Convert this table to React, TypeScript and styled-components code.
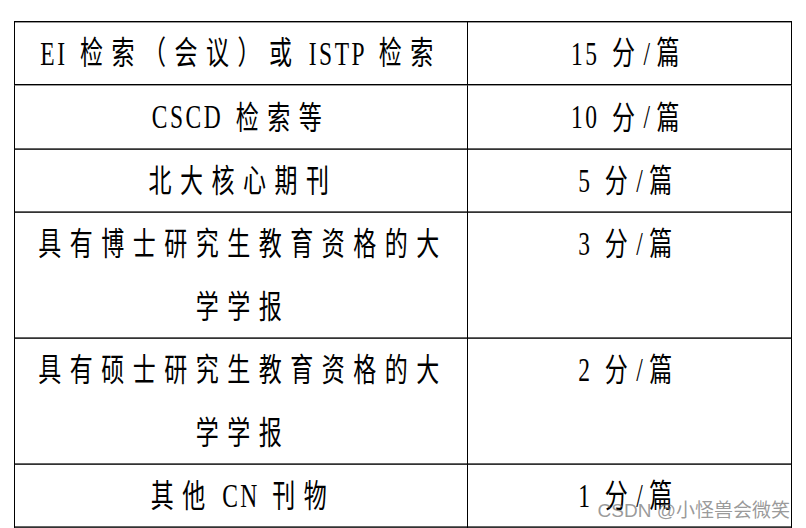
import styled, { createGlobalStyle } from "styled-components";

const GlobalStyle = createGlobalStyle`
  html, body {
    margin: 0;
    padding: 0;
    background: #fff;
  }
  body {
    width: 806px;
    height: 528px;
    overflow: hidden;
    font-family: "Liberation Serif", "Noto Sans CJK SC", serif;
    color: #000;
  }
`;

const Page = styled.div`
  position: relative;
  width: 806px;
  height: 528px;
  padding: 21px 0 0 14px;
  box-sizing: border-box;
  overflow: hidden;
`;

const Table = styled.table`
  border-collapse: collapse;
  table-layout: fixed;
  width: 777px;
  transform: scaleY(1.4);
  transform-origin: top left;
`;

const Cell = styled.td<{ $width: number }>`
  width: ${(p) => p.$width}px;
  border: 1px solid #000;
  padding: 0 18px;
  box-sizing: border-box;
  text-align: center;
  vertical-align: top;
  font-family: "Noto Sans CJK SC", sans-serif;
  font-size: 23px;
  line-height: 44.4px;
`;

const Han = styled.span`
  font-family: "Noto Sans CJK SC", sans-serif;
  font-size: 23px;
  line-height: 1;
  vertical-align: 1.8px;
  letter-spacing: 8.5px;
  padding-left: 4px;
  -webkit-box-decoration-break: clone;
  box-decoration-break: clone;
`;

const Latin = styled.span`
  font-family: "Liberation Serif", serif;
  font-size: 23.5px;
  line-height: 1;
  vertical-align: 1.8px;
  letter-spacing: 2.5px;
`;

const Watermark = styled.div`
  position: absolute;
  right: 16px;
  bottom: 6px;
  font-family: "Liberation Sans", "Noto Sans CJK SC", sans-serif;
  font-size: 19px;
  color: rgba(110, 110, 110, 0.7);
  white-space: nowrap;
`;

const rows = [
  { name: "EI 检索（会议）或 ISTP 检索", score: "15 分/篇" },
  { name: "CSCD 检索等", score: "10 分/篇" },
  { name: "北大核心期刊", score: "5 分/篇" },
  { name: "具有博士研究生教育资格的大学学报", score: "3 分/篇" },
  { name: "具有硕士研究生教育资格的大学学报", score: "2 分/篇" },
  { name: "其他 CN 刊物", score: "1 分/篇" },
];

// split a string into runs of ASCII (half-width) and Chinese (full-width) text
function Mixed({ text }: { text: string }) {
  const parts = text.match(/[\x20-\x7e]+|[^\x20-\x7e]+/g) || [];
  return (
    <>
      {parts.map((part, i) =>
        /^[\x20-\x7e]+$/.test(part) ? (
          <Latin key={i}>{part}</Latin>
        ) : (
          <Han key={i}>{part}</Han>
        )
      )}
    </>
  );
}

export default function App() {
  return (
    <Page>
      <GlobalStyle />
      <Table>
        <tbody>
          {rows.map((row) => (
            <tr key={row.name}>
              <Cell $width={453}>
                <Mixed text={row.name} />
              </Cell>
              <Cell $width={324}>
                <Mixed text={row.score} />
              </Cell>
            </tr>
          ))}
        </tbody>
      </Table>
      <Watermark>CSDN @小怪兽会微笑</Watermark>
    </Page>
  );
}
